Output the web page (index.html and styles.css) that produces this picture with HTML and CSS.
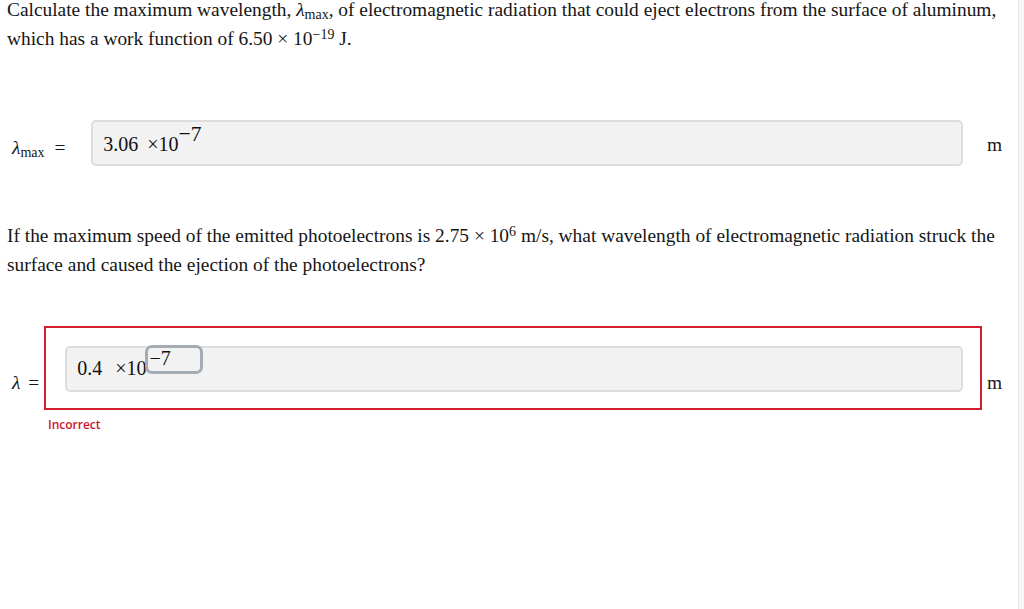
FILE: index.html
```html
<!DOCTYPE html>
<html lang="en">
<head>
<meta charset="utf-8">
<title>Photoelectric effect</title>
<link rel="stylesheet" href="styles.css">
</head>
<body>
<div class="page">
  <main class="content">
    <p class="prompt prompt-first">Calculate the maximum wavelength, <span class="sym">λ</span><sub class="sub">max</sub>, of electromagnetic radiation that could eject electrons from the surface of aluminum, which has a work function of 6.50 × 10<sup class="sup">−19</sup> J.</p>

    <div class="answer-row row-first">
      <span class="label"><span class="sym">λ</span><sub class="label-sub">max</sub> <span class="eq">=</span></span>
      <div class="answer-frame">
        <div class="answer-field">
          <span class="num">3.06</span>
          <span class="num times">×10</span>
          <span class="exp">−7</span>
        </div>
      </div>
      <span class="unit">m</span>
    </div>

    <p class="prompt prompt-second">If the maximum speed of the emitted photoelectrons is 2.75 × 10<sup class="sup">6</sup> m/s, what wavelength of electromagnetic radiation struck the surface and caused the ejection of the photoelectrons?</p>

    <div class="answer-row row-second">
      <span class="label"><span class="sym">λ</span> <span class="eq">=</span></span>
      <div class="answer-frame is-wrong">
        <div class="answer-field">
          <span class="num">0.4</span>
          <span class="num times">×10</span>
          <span class="exp exp-box">−7</span>
        </div>
      </div>
      <span class="unit">m</span>
    </div>
    <div class="feedback">Incorrect</div>
  </main>
  <div class="scroll-track"></div>
</div>
</body>
</html>
```

FILE: styles.css
```css
html, body {
  margin: 0;
  padding: 0;
  background: #ffffff;
}

body {
  font-family: "Liberation Serif", "Times New Roman", serif;
  color: #161616;
}

.page {
  display: flex;
  height: 100vh;
  overflow: hidden;
}

.content {
  flex: 1;
  padding: 0 0 0 7px;
  min-width: 0;
}

.scroll-track {
  width: 5px;
  flex: none;
  background: #f7f7f7;
  border-left: 1px solid #e6e6e6;
}

.prompt {
  margin: 0;
  font-size: 19.4px;
  line-height: 28.8px;
}

.prompt-first {
  margin-top: -4px;
}

.prompt-second {
  margin-top: 38.5px;
}

.sym {
  font-style: italic;
}

.sub {
  font-size: 14px;
  line-height: 0;
  vertical-align: -3px;
}

.sup {
  font-size: 14px;
  line-height: 0;
  vertical-align: 6px;
}

.answer-row {
  display: flex;
  align-items: center;
  padding: 0 16px 0 5px;
}

.row-first {
  margin-top: 46px;
}

.row-second {
  margin-top: 46.4px;
}

.label {
  font-size: 19.4px;
  line-height: 20px;
  white-space: nowrap;
  margin-right: 5px;
}

.label-sub {
  font-size: 14px;
  line-height: 0;
  vertical-align: -3px;
}

.eq {
  margin-left: 3px;
}

.row-first .eq {
  margin-left: 5px;
}

.row-first .label {
  padding-top: 12px;
}

.row-second .label {
  padding-top: 30px;
}

.unit {
  font-size: 19.4px;
  line-height: 20px;
  margin-left: 5px;
}

.row-first .unit {
  padding-top: 6px;
}

.row-second .unit {
  padding-top: 30px;
}

.answer-frame {
  flex: 1;
  border: 2px solid transparent;
  padding: 18px 17px 16px 19px;
}

.answer-frame.is-wrong {
  border-color: #d21e2e;
}

.answer-field {
  display: flex;
  align-items: flex-start;
  height: 46px;
  box-sizing: border-box;
  background: #f2f2f2;
  border: 2px solid #dddddd;
  border-radius: 5px;
  padding: 0 10px;
  color: #111;
  white-space: nowrap;
}

.num {
  font-size: 20px;
  line-height: 24px;
  margin-top: 10px;
}

.row-second .num {
  margin-top: 8px;
}

.times {
  margin-left: 9px;
}

.row-second .times {
  margin-left: 13px;
}

.exp {
  font-size: 21.5px;
  line-height: 24px;
  margin-top: 0;
}

.exp-box {
  flex: none;
  font-size: 20px;
  box-sizing: border-box;
  width: 58px;
  height: 29px;
  border: 3px solid #a4abb4;
  border-radius: 7px;
  padding: 0 0 0 1px;
  line-height: 20px;
  margin: -3px 0 0 -1px;
}

.feedback {
  margin: 7px 0 0 41px;
  font-family: "Open Sans", "Noto Sans", sans-serif;
  font-size: 12px;
  font-weight: 600;
  line-height: 16px;
  color: #d0142c;
}
```
